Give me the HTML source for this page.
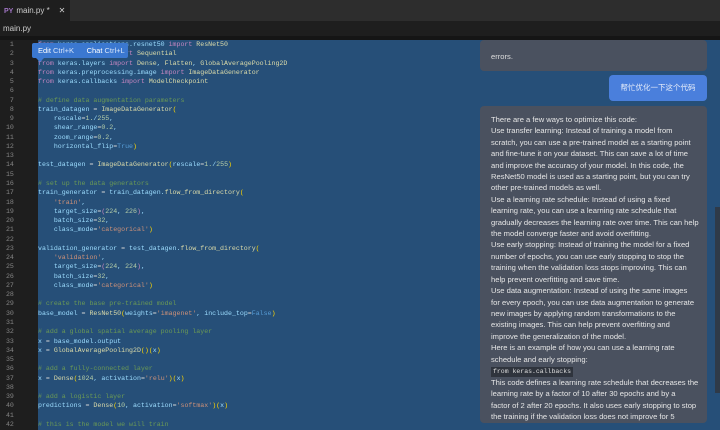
<!DOCTYPE html>
<html><head><meta charset="utf-8"><style>
*{margin:0;padding:0;box-sizing:border-box}
body{width:720px;height:430px;overflow:hidden;background:#264f78;font-family:"Liberation Sans","Noto Sans CJK SC",sans-serif;position:relative}
#tabs{position:absolute;left:0;top:0;width:720px;height:21px;background:#2d2d2d}
#tab{position:absolute;left:0;top:0;width:70px;height:21px;background:#1e1e1e;color:#ccc;font-size:8px;line-height:21px;padding-left:4px}
#tab b{color:#a074c4;font-size:7px;margin-right:3px}
#crumb{position:absolute;left:0;top:21px;width:720px;height:15px;background:#1e1e1e;color:#ccc;font-size:8px;line-height:15px;padding-left:3px}
#shadow{position:absolute;left:0;top:36px;width:720px;height:4px;background:#151515}
#gutter{position:absolute;left:0;top:40px;width:38px;height:390px;background:#1e1e1e}
#code{position:absolute;left:38px;top:40px;font:6.6px/9.27px "Liberation Mono",monospace;color:#9cdcfe;white-space:pre}
.k{color:#c586c0}.c{color:#dcdcaa}.f{color:#dcdcaa}.s{color:#ce9178}.m{color:#6a9955}.n{color:#b5cea8}.b{color:#569cd6}.y{color:#ffd700}.w{color:#d4d4d4}
#tip{position:absolute;left:32px;top:43px;width:96px;height:15px;background:#3b78d0;border-radius:2px;color:#fff;font-size:7.5px;line-height:15px;padding-left:6px;white-space:nowrap}
#tip span{color:#d6e4fa}
#tip:after{content:"";position:absolute;left:4px;bottom:-4px;border:4px solid transparent;border-top-color:#3b78d0;border-bottom:0}
.panel{position:absolute;background:#4a515f;border-radius:4px;color:#e6e6e6;font-size:7.6px;line-height:11.4px}
#p1{left:480px;top:40px;width:227px;height:31px;overflow:hidden}
#user{position:absolute;left:609px;top:75px;width:98px;height:26px;background:#4a7fdc;border-radius:4px;color:#e8eefa;font-size:7.5px;line-height:26px;text-align:center}
#p2{left:480px;top:106px;width:227px;height:317px;padding:8px 0 0 11px;white-space:nowrap;overflow:hidden}
.code{display:inline-block;background:#2f343d;font:6.5px/10px "Liberation Mono",monospace;padding:0 2px;color:#ddd}
#sb{position:absolute;left:715px;top:207px;width:5px;height:186px;background:#2f3a48}
</style></head><body>
<div id="tabs"><div id="tab"><b>PY</b>main.py * &nbsp;&nbsp;&nbsp;✕</div></div>
<div id="crumb">main.py</div>
<div id="gutter"></div>
<div id="code"><span class="k">from</span> keras.applications.resnet50 <span class="k">import</span> <span class="c">ResNet50</span>
<span class="k">from</span> keras.models <span class="k">import</span> <span class="c">Sequential</span>
<span class="k">from</span> keras.layers <span class="k">import</span> <span class="c">Dense</span>, <span class="c">Flatten</span>, <span class="c">GlobalAveragePooling2D</span>
<span class="k">from</span> keras.preprocessing.image <span class="k">import</span> <span class="c">ImageDataGenerator</span>
<span class="k">from</span> keras.callbacks <span class="k">import</span> <span class="c">ModelCheckpoint</span>

<span class="m"># define data augmentation parameters</span>
train_datagen <span class="w">=</span> <span class="c">ImageDataGenerator</span><span class="y">(</span>
    rescale<span class="w">=</span><span class="n">1.</span>/<span class="n">255</span>,
    shear_range<span class="w">=</span><span class="n">0.2</span>,
    zoom_range<span class="w">=</span><span class="n">0.2</span>,
    horizontal_flip<span class="w">=</span><span class="b">True</span><span class="y">)</span>

test_datagen <span class="w">=</span> <span class="c">ImageDataGenerator</span><span class="y">(</span>rescale<span class="w">=</span><span class="n">1.</span>/<span class="n">255</span><span class="y">)</span>

<span class="m"># set up the data generators</span>
train_generator <span class="w">=</span> train_datagen.<span class="f">flow_from_directory</span><span class="y">(</span>
    <span class="s">'train'</span>,
    target_size<span class="w">=</span><span class="k">(</span><span class="n">224</span>, <span class="n">226</span><span class="k">)</span>,
    batch_size<span class="w">=</span><span class="n">32</span>,
    class_mode<span class="w">=</span><span class="s">'categorical'</span><span class="y">)</span>

validation_generator <span class="w">=</span> test_datagen.<span class="f">flow_from_directory</span><span class="y">(</span>
    <span class="s">'validation'</span>,
    target_size<span class="w">=</span><span class="k">(</span><span class="n">224</span>, <span class="n">224</span><span class="k">)</span>,
    batch_size<span class="w">=</span><span class="n">32</span>,
    class_mode<span class="w">=</span><span class="s">'categorical'</span><span class="y">)</span>

<span class="m"># create the base pre-trained model</span>
base_model <span class="w">=</span> <span class="c">ResNet50</span><span class="y">(</span>weights<span class="w">=</span><span class="s">'imagenet'</span>, include_top<span class="w">=</span><span class="b">False</span><span class="y">)</span>

<span class="m"># add a global spatial average pooling layer</span>
x <span class="w">=</span> base_model.output
x <span class="w">=</span> <span class="c">GlobalAveragePooling2D</span><span class="y">()(</span>x<span class="y">)</span>

<span class="m"># add a fully-connected layer</span>
x <span class="w">=</span> <span class="c">Dense</span><span class="y">(</span><span class="n">1024</span>, activation<span class="w">=</span><span class="s">'relu'</span><span class="y">)(</span>x<span class="y">)</span>

<span class="m"># add a logistic layer</span>
predictions <span class="w">=</span> <span class="c">Dense</span><span class="y">(</span><span class="n">10</span>, activation<span class="w">=</span><span class="s">'softmax'</span><span class="y">)(</span>x<span class="y">)</span>

<span class="m"># this is the model we will train</span></div>
<div id="tip">Edit <span>Ctrl+K</span> &nbsp;&nbsp;&nbsp;&nbsp;&nbsp;Chat <span>Ctrl+L</span></div>
<div class="panel" id="p1"><div style="position:absolute;left:11px;top:11px;font-size:7.6px;color:#ddd">errors.</div></div>
<div id="shadow"></div>
<div id="user">帮忙优化一下这个代码</div>
<div class="panel" id="p2">
<div>There are a few ways to optimize this code:</div>
<div>Use transfer learning: Instead of training a model from</div>
<div>scratch, you can use a pre-trained model as a starting point</div>
<div>and fine-tune it on your dataset. This can save a lot of time</div>
<div>and improve the accuracy of your model. In this code, the</div>
<div>ResNet50 model is used as a starting point, but you can try</div>
<div>other pre-trained models as well.</div>
<div>Use a learning rate schedule: Instead of using a fixed</div>
<div>learning rate, you can use a learning rate schedule that</div>
<div>gradually decreases the learning rate over time. This can help</div>
<div>the model converge faster and avoid overfitting.</div>
<div>Use early stopping: Instead of training the model for a fixed</div>
<div>number of epochs, you can use early stopping to stop the</div>
<div>training when the validation loss stops improving. This can</div>
<div>help prevent overfitting and save time.</div>
<div>Use data augmentation: Instead of using the same images</div>
<div>for every epoch, you can use data augmentation to generate</div>
<div>new images by applying random transformations to the</div>
<div>existing images. This can help prevent overfitting and</div>
<div>improve the generalization of the model.</div>
<div>Here is an example of how you can use a learning rate</div>
<div>schedule and early stopping:</div>
<div><span class="code">from keras.callbacks</span></div>
<div>This code defines a learning rate schedule that decreases the</div>
<div>learning rate by a factor of 10 after 30 epochs and by a</div>
<div>factor of 2 after 20 epochs. It also uses early stopping to stop</div>
<div>the training if the validation loss does not improve for 5</div>
<div>epochs.</div>
</div>
<div id="sb"></div>
<div style="position:absolute;left:0;top:40px;width:38px;height:390px;overflow:hidden;font:6.6px/9.27px 'Liberation Mono',monospace;color:#858585;white-space:pre;padding-left:2px">  1
  2
  3
  4
  5
  6
  7
  8
  9
 10
 11
 12
 13
 14
 15
 16
 17
 18
 19
 20
 21
 22
 23
 24
 25
 26
 27
 28
 29
 30
 31
 32
 33
 34
 35
 36
 37
 38
 39
 40
 41
 42</div>
</body></html>
